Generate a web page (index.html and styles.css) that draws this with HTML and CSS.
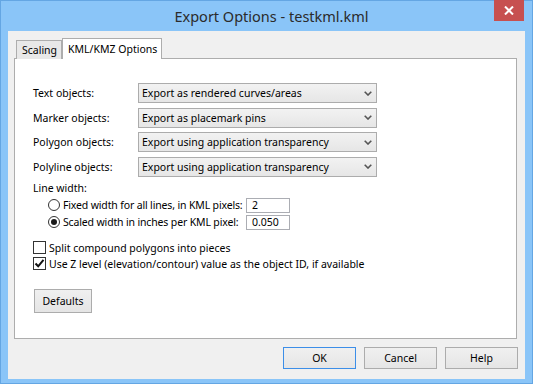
FILE: index.html
```html
<!DOCTYPE html>
<html>
<head>
<meta charset="utf-8">
<link rel="stylesheet" href="styles.css">
</head>
<body>
<div class="window">
  <div class="titlebar">
    <div class="title">Export Options - testkml.kml</div>
    <div class="close"><svg width="10" height="9" viewBox="0 0 10 9"><path d="M1 0.5 L9 8.5 M9 0.5 L1 8.5" stroke="#fff" stroke-width="2"/></svg></div>
  </div>
  <div class="client">
    <div class="tabs">
      <div class="tab">Scaling</div>
      <div class="tab active">KML/KMZ Options</div>
    </div>
    <div class="panel">
      <div class="grid">
        <div class="lbl">Text objects:</div>
        <div class="select"><span>Export as rendered curves/areas</span><svg class="chev" width="8" height="5" viewBox="0 0 8 5"><path d="M0.7 0.7 L4 4 L7.3 0.7" fill="none" stroke="#555" stroke-width="1.6"/></svg></div>
        <div class="lbl">Marker objects:</div>
        <div class="select"><span>Export as placemark pins</span><svg class="chev" width="8" height="5" viewBox="0 0 8 5"><path d="M0.7 0.7 L4 4 L7.3 0.7" fill="none" stroke="#555" stroke-width="1.6"/></svg></div>
        <div class="lbl">Polygon objects:</div>
        <div class="select"><span>Export using application transparency</span><svg class="chev" width="8" height="5" viewBox="0 0 8 5"><path d="M0.7 0.7 L4 4 L7.3 0.7" fill="none" stroke="#555" stroke-width="1.6"/></svg></div>
        <div class="lbl">Polyline objects:</div>
        <div class="select"><span>Export using application transparency</span><svg class="chev" width="8" height="5" viewBox="0 0 8 5"><path d="M0.7 0.7 L4 4 L7.3 0.7" fill="none" stroke="#555" stroke-width="1.6"/></svg></div>
      </div>
      <div class="linewidth">Line width:</div>
      <div class="radios">
        <div class="rrow"><span class="radio"></span><span class="rtext">Fixed width for all lines, in KML pixels:</span><span class="field">2</span></div>
        <div class="rrow"><span class="radio on"></span><span class="rtext">Scaled width in inches per KML pixel:</span><span class="field">0.050</span></div>
      </div>
      <div class="checks">
        <div class="crow"><span class="box"></span><span>Split compound polygons into pieces</span></div>
        <div class="crow"><span class="box"><svg width="11" height="11" viewBox="0 0 11 11"><path d="M1.5 5.5 L4.2 8.3 L9.5 1.8" fill="none" stroke="#111" stroke-width="2"/></svg></span><span>Use Z level (elevation/contour) value as the object ID, if available</span></div>
      </div>
      <div class="btn defaults">Defaults</div>
    </div>
    <div class="buttons">
      <div class="btn dlg ok">OK</div>
      <div class="btn dlg">Cancel</div>
      <div class="btn dlg">Help</div>
    </div>
  </div>
</div>
</body>
</html>
```

FILE: styles.css
```css
* { box-sizing: border-box; }
html, body { margin: 0; padding: 0; }
body {
  width: 533px;
  height: 384px;
  overflow: hidden;
  font-family: "Noto Sans", "Open Sans", sans-serif;
  font-size: 10.5px;
  color: #000;
  white-space: nowrap;
}
.window {
  width: 533px;
  height: 384px;
  background: #8ac5f8;
  border: 1px solid #64a6e3;
  display: flex;
  flex-direction: column;
}
.titlebar {
  height: 30px;
  position: relative;
  display: flex;
  align-items: center;
  justify-content: center;
  padding-left: 10px;
}
.title {
  font-family: "Noto Sans", "Open Sans", sans-serif;
  font-size: 14.5px;
  color: #2b2b2b;
  margin-top: -1px;
}
.close {
  position: absolute;
  right: 8px;
  top: -1px;
  width: 30px;
  height: 21px;
  background: #c75050;
  display: flex;
  align-items: center;
  justify-content: center;
}
.client {
  margin: 0 7px;
  height: 348px;
  background: #f0f0f0;
  padding: 7px 8px 0 6px;
  display: flex;
  flex-direction: column;
}
.tabs {
  display: flex;
  align-items: flex-end;
  padding-left: 2px;
  height: 21px;
  position: relative;
  z-index: 1;
  margin-bottom: -1px;
}
.tab {
  height: 19px;
  padding: 0 4px 0 5px;
  border: 1px solid #adadad;
  border-bottom: none;
  background: #e8e8e8;
  display: flex;
  align-items: center;
  line-height: 1;
}
.tab.active {
  height: 21px;
  background: #fff;
  border-left: 1px solid #adadad;
  padding: 0 4px 0 5px;
  position: relative;
}
.panel {
  width: 503px;
  height: 281px;
  background: #fff;
  border: 1px solid #adadad;
  padding: 24px 0 0 18px;
  display: flex;
  flex-direction: column;
}
.grid {
  display: grid;
  grid-template-columns: 105px 239px;
  grid-auto-rows: 20px;
  row-gap: 4.6px;
  align-items: center;
}
.select {
  height: 20px;
  border: 1px solid #acacac;
  background: linear-gradient(#f2f2f2, #e6e6e6);
  display: flex;
  align-items: center;
  justify-content: space-between;
  padding: 0 4px 0 3px;
}
.linewidth {
  margin-top: 4px;
  height: 15px;
  line-height: 15px;
}
.radios {
  margin-top: 1px;
  padding-left: 15px;
  display: flex;
  flex-direction: column;
}
.rrow {
  height: 17px;
  display: flex;
  align-items: center;
}
.radio {
  flex: none;
  width: 12px;
  height: 12px;
  border: 1px solid #333;
  border-radius: 50%;
  background: #fff;
  margin-right: 3px;
  display: flex;
  align-items: center;
  justify-content: center;
}
.radio.on::after {
  content: "";
  width: 6px;
  height: 6px;
  border-radius: 50%;
  background: #1a1a1a;
}
.rtext { width: 183px; flex: none; letter-spacing: -0.15px; }
.field {
  flex: none;
  width: 44px;
  height: 15px;
  border: 1px solid #abadb3;
  background: #fff;
  padding-left: 5px;
  line-height: 13px;
}
.checks {
  margin-top: 9px;
  display: flex;
  flex-direction: column;
}
.crow {
  height: 16px;
  display: flex;
  align-items: center;
}
.box {
  flex: none;
  width: 13px;
  height: 13px;
  border: 1px solid #333;
  background: #fff;
  margin-right: 3px;
  display: flex;
  align-items: center;
  justify-content: center;
}
.btn {
  border: 1px solid #acacac;
  background: linear-gradient(#f0f0f0, #e5e5e5);
  display: flex;
  align-items: center;
  justify-content: center;
}
.defaults {
  margin-top: 17px;
  margin-left: 1px;
  width: 58px;
  height: 24px;
}
.buttons {
  margin-top: 8px;
  display: flex;
  justify-content: flex-end;
  gap: 8px;
  margin-right: -1px;
}
.dlg {
  width: 73px;
  height: 22px;
}
.ok { border-color: #3c8ee8; }
```
